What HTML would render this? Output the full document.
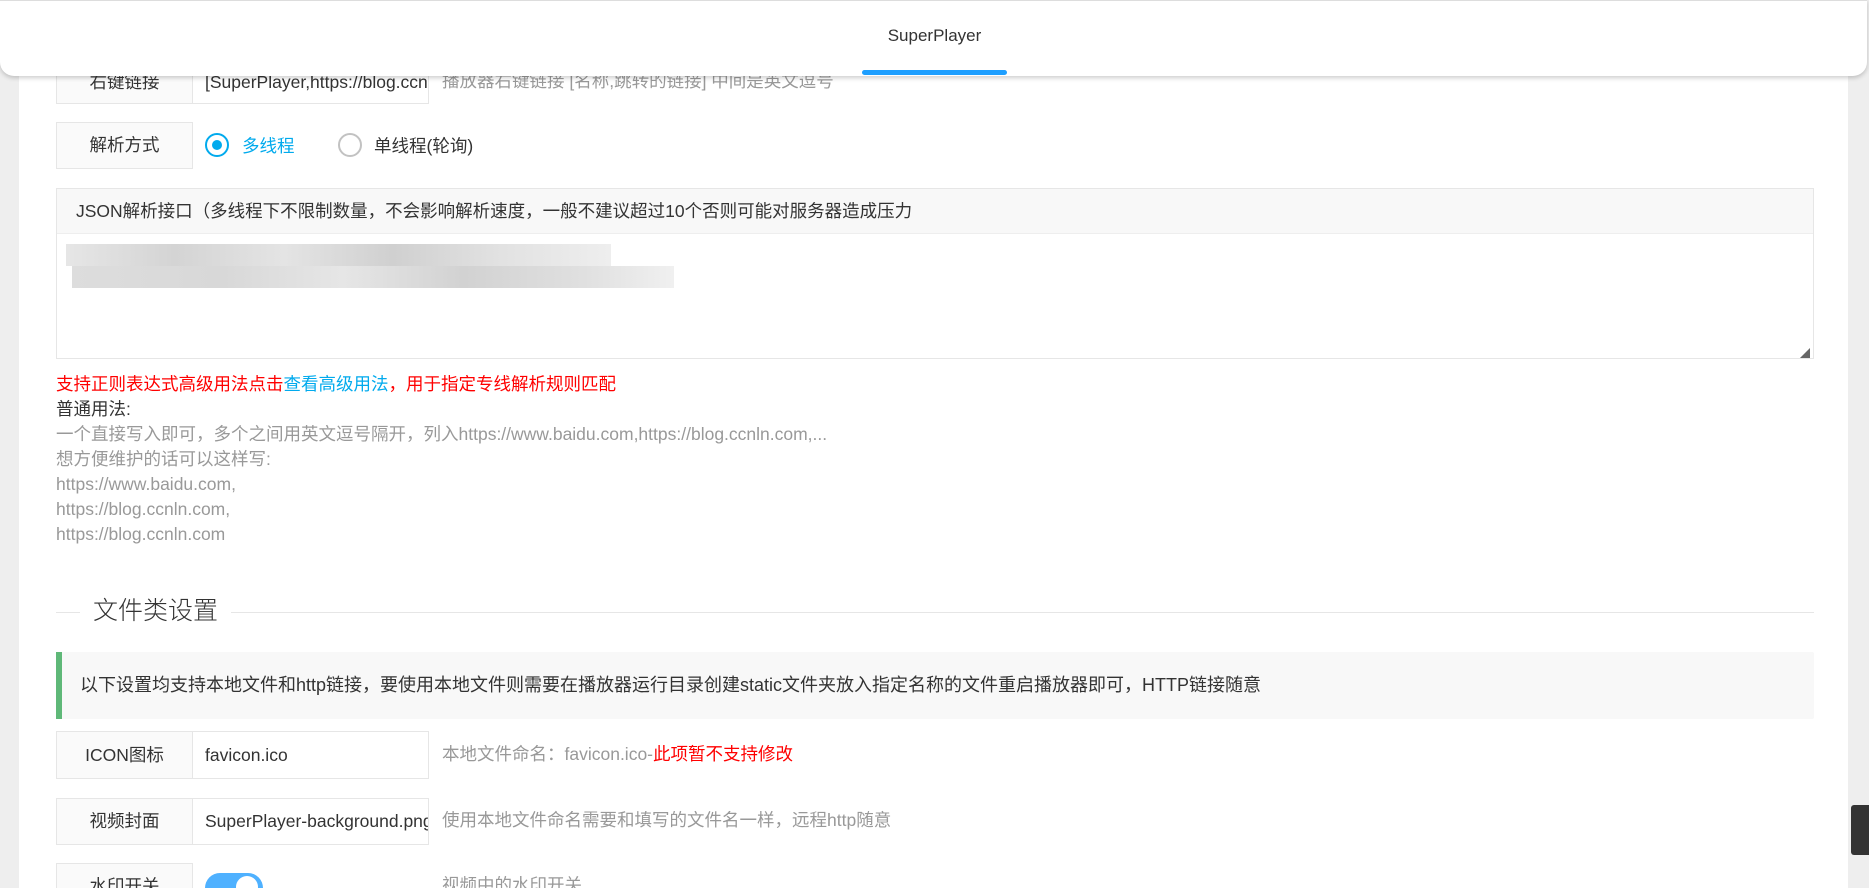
<!DOCTYPE html>
<html><head><meta charset="utf-8"><style>
*{box-sizing:border-box;margin:0;padding:0}
html,body{width:1869px;height:888px;overflow:hidden}
body{background:#eee;font-family:"Liberation Sans","Noto Sans CJK SC",sans-serif;font-size:17.5px;color:#333;position:relative}
.main{position:absolute;left:19px;top:0;width:1829px;height:888px;background:#fff}
.a{position:absolute;white-space:nowrap}
.top{position:absolute;left:0;top:0;width:1867px;height:76px;background:#fff;border-radius:0 0 14px 14px;box-shadow:0 2px 5px rgba(0,0,0,.2);border-top:1px solid #ddd;z-index:5}
.lab{position:absolute;left:56px;width:137px;background:#fafafa;border:1px solid #e6e6e6;text-align:center;color:#333}
.inp{position:absolute;left:192px;width:237px;border:1px solid #e6e6e6;border-left:none;padding-left:13px;white-space:nowrap;overflow:hidden;color:#333}
.help{position:absolute;left:442px;color:#999;white-space:nowrap}
.g{color:#999}
.clip{position:absolute;left:0;top:0;width:1869px;height:888px;overflow:hidden}
</style></head><body>
<div class="clip">
<div class="main"></div>
<div class="top">
 <div class="a" style="left:862px;top:25px;width:145px;text-align:center;font-size:17px;color:#333">SuperPlayer</div>
 <div class="a" style="left:862px;top:69px;width:145px;height:5px;background:#1e9fff;border-radius:3px"></div>
</div>
<div class="lab" style="top:58px;height:46px;line-height:46px">右键链接</div>
<div class="inp" style="top:58px;height:46px;line-height:46px">[SuperPlayer,https://blog.ccnln.com]</div>
<div class="help" style="top:58px;line-height:46px">播放器右键链接 [名称,跳转的链接] 中间是英文逗号</div>
<div class="lab" style="top:122px;height:47px;line-height:45px">解析方式</div>
<div class="a" style="left:205px;top:133px;width:24px;height:24px;border:2px solid #01aaed;border-radius:50%"></div>
<div class="a" style="left:212px;top:140px;width:10px;height:10px;background:#01aaed;border-radius:50%"></div>
<div class="a" style="left:242px;top:133px;color:#01aaed">多线程</div>
<div class="a" style="left:338px;top:133px;width:24px;height:24px;border:2px solid #c2c2c2;border-radius:50%"></div>
<div class="a" style="left:374px;top:133px">单线程(轮询)</div>
<div class="a" style="left:56px;top:188px;width:1758px;height:171px;border:1px solid #e6e6e6"></div>
<div class="a" style="left:57px;top:189px;width:1756px;height:45px;background:#f8f8f8;border-bottom:1px solid #eee;padding-left:19px;line-height:44px">JSON解析接口（多线程下不限制数量，不会影响解析速度，一般不建议超过10个否则可能对服务器造成压力</div>
<div class="a" style="left:66px;top:244px;width:545px;height:22px;background:linear-gradient(90deg,#e6e6e6,#d4d4d4 20%,#e4e4e4 40%,#d0d0d0 60%,#e2e2e2 80%,#eee)"></div>
<div class="a" style="left:72px;top:266px;width:602px;height:22px;background:linear-gradient(90deg,#ddd,#d8d8d8 25%,#e6e6e6 45%,#d2d2d2 65%,#e0e0e0 85%,#f0f0f0)"></div>
<div class="a" style="left:1800px;top:345px;font-size:10px;color:#666">◢</div>
<div class="a" style="left:56px;top:372px;line-height:25px;color:#f00">支持正则表达式高级用法点击<span style="color:#01aaed">查看高级用法</span>，用于指定专线解析规则匹配</div>
<div class="a" style="left:56px;top:397px;line-height:25px">普通用法:<br><span class="g">一个直接写入即可，多个之间用英文逗号隔开，列入https://www.baidu.com,https://blog.ccnln.com,...<br>想方便维护的话可以这样写:<br>https://www.baidu.com,<br>https://blog.ccnln.com,<br>https://blog.ccnln.com</span></div>
<div class="a" style="left:56px;top:612px;width:1758px;height:1px;background:#e6e6e6"></div>
<div class="a" style="left:80px;top:596px;padding:0 13px;background:#fff;font-size:25px;font-weight:300;line-height:30px">文件类设置</div>
<div class="a" style="left:56px;top:652px;width:1758px;height:67px;background:#f8f8f8;border-left:6px solid #5fb878;border-radius:0 2px 2px 0;padding-left:18px;line-height:67px;font-size:18px">以下设置均支持本地文件和http链接，要使用本地文件则需要在播放器运行目录创建static文件夹放入指定名称的文件重启播放器即可，HTTP链接随意</div>
<div class="lab" style="top:731px;height:48px;line-height:46px">ICON图标</div>
<div class="inp" style="top:731px;height:48px;line-height:46px">favicon.ico</div>
<div class="help" style="top:731px;line-height:46px">本地文件命名：favicon.ico-<span style="color:#f00">此项暂不支持修改</span></div>
<div class="lab" style="top:798px;height:47px;line-height:45px">视频封面</div>
<div class="inp" style="top:798px;height:47px;line-height:45px">SuperPlayer-background.png</div>
<div class="help" style="top:798px;line-height:45px">使用本地文件命名需要和填写的文件名一样，远程http随意</div>
<div class="lab" style="top:863px;height:47px;line-height:45px">水印开关</div>
<div class="a" style="left:205px;top:873px;width:58px;height:30px;background:#4fb1ff;border-radius:15px"></div>
<div class="a" style="left:236px;top:876px;width:22px;height:22px;background:#fff;border-radius:50%"></div>
<div class="help" style="top:863px;line-height:45px">视频中的水印开关</div>
<div class="a" style="left:1851px;top:805px;width:18px;height:50px;background:#333;border-radius:3px 0 0 3px"></div>
</div>
</body></html>
